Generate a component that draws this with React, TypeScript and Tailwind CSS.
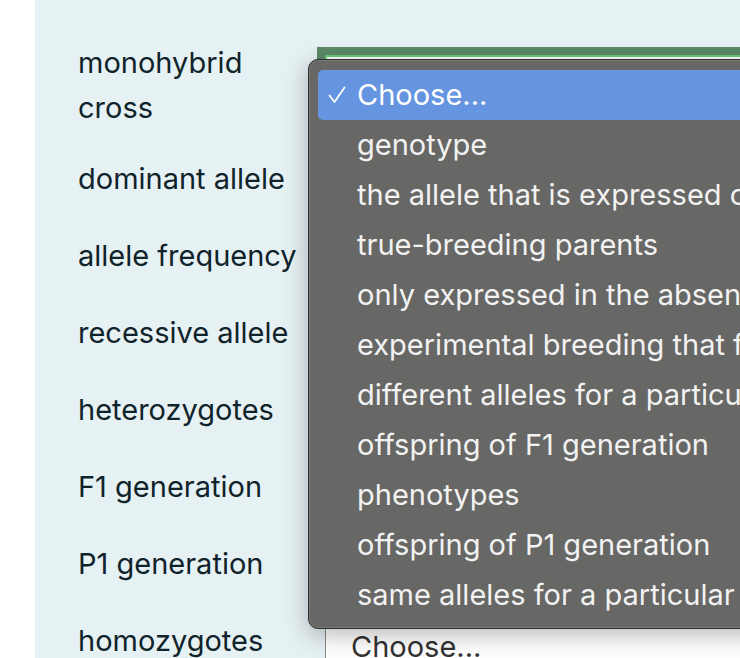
import React from "react";

const labels = [
  "dominant allele",
  "allele frequency",
  "recessive allele",
  "heterozygotes",
  "F1 generation",
  "P1 generation",
];

const options = [
  "genotype",
  "the allele that is expressed over another allele",
  "true-breeding parents",
  "only expressed in the absence of the dominant allele",
  "experimental breeding that follows a single trait",
  "different alleles for a particular trait",
  "offspring of F1 generation",
  "phenotypes",
  "offspring of P1 generation",
  "same alleles for a particular trait",
];

export default function App() {
  return (
    <div className="flex w-[740px] h-[658px] overflow-hidden font-['Inter',sans-serif]">
      <div className="w-[35px] shrink-0 bg-white" />
      <div className="relative flex-1 bg-[#e6f1f3] pl-[43px] pt-[40px]">
        {/* row 1 */}
        <div className="flex items-start mb-[26px]">
          <div className="w-[240px] shrink-0 text-[29px] leading-[45px] text-[#10232b]">
            monohybrid cross
          </div>
          <div className="ml-[7px] mt-[15px] h-[58px] w-[420px] shrink-0 border-2 border-[#6bcf7c] bg-white shadow-[0_0_0_8px_#5b8a68]" />
        </div>
        {labels.map((l) => (
          <div key={l} className="flex items-start mb-[32px]">
            <div className="w-[240px] shrink-0 text-[29px] leading-[45px] text-[#10232b] whitespace-nowrap">
              {l}
            </div>
          </div>
        ))}
        <div className="flex items-start">
          <div className="w-[240px] shrink-0 text-[29px] leading-[45px] text-[#10232b]">
            homozygotes
          </div>
          <div className="ml-[7px] flex h-[58px] w-[420px] shrink-0 items-center border border-[#8a8a8a] bg-white pl-[25px] text-[29px] text-[#333]">
            Choose...
          </div>
        </div>

        {/* open menu */}
        <div className="absolute left-[273px] top-[59px] w-[500px] rounded-[10px] border border-[#2f2f2f] bg-[#676765] pt-[10px] pb-[8px] pl-[9px] shadow-[inset_0_0_0_1px_rgba(255,255,255,0.12),0_6px_24px_rgba(0,0,0,0.28)]">
          <div className="flex h-[50px] items-center rounded-[5px] bg-[#6594e0] text-[29px] text-white">
            <svg className="ml-[10px] mr-[11px] h-[18px] w-[18px]" viewBox="0 0 18 18" fill="none">
              <path d="M1.5 9.5 L6.5 16 L16.5 1.5" stroke="white" strokeWidth="1.8" strokeLinecap="round" strokeLinejoin="round" />
            </svg>
            <span>Choose...</span>
          </div>
          {options.map((o) => (
            <div key={o} className="flex h-[50px] items-center whitespace-nowrap pl-[39px] text-[29px] text-[#f2f2f2]">
              {o}
            </div>
          ))}
        </div>
      </div>
    </div>
  );
}
